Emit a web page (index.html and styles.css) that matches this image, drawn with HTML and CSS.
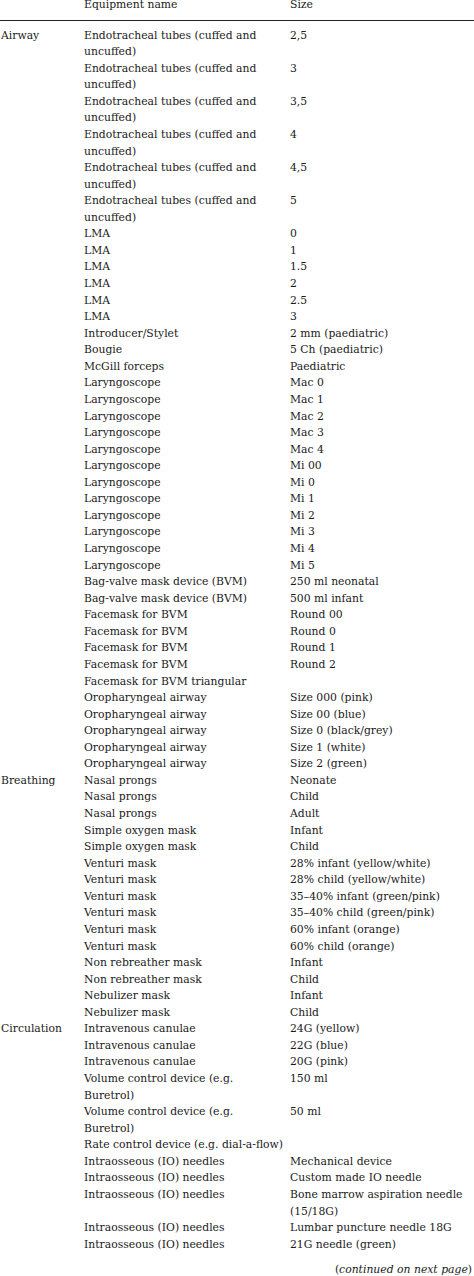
FILE: index.html
```html
<!DOCTYPE html>
<html>
<head>
<meta charset="utf-8">
<link rel="stylesheet" href="styles.css">
</head>
<body>
<div class="table">
  <div class="head">
    <div class="c1"></div>
    <div class="c2">Equipment name</div>
    <div class="c3">Size</div>
  </div>
  <div class="body">
    <div class="group">
      <div class="label">Airway</div>
      <div class="rows">
        <div class="row"><div>Endotracheal tubes (cuffed and<br>uncuffed)</div><div>2,5</div></div>
        <div class="row"><div>Endotracheal tubes (cuffed and<br>uncuffed)</div><div>3</div></div>
        <div class="row"><div>Endotracheal tubes (cuffed and<br>uncuffed)</div><div>3,5</div></div>
        <div class="row"><div>Endotracheal tubes (cuffed and<br>uncuffed)</div><div>4</div></div>
        <div class="row"><div>Endotracheal tubes (cuffed and<br>uncuffed)</div><div>4,5</div></div>
        <div class="row"><div>Endotracheal tubes (cuffed and<br>uncuffed)</div><div>5</div></div>
        <div class="row"><div>LMA</div><div>0</div></div>
        <div class="row"><div>LMA</div><div>1</div></div>
        <div class="row"><div>LMA</div><div>1.5</div></div>
        <div class="row"><div>LMA</div><div>2</div></div>
        <div class="row"><div>LMA</div><div>2.5</div></div>
        <div class="row"><div>LMA</div><div>3</div></div>
        <div class="row"><div>Introducer/Stylet</div><div>2 mm (paediatric)</div></div>
        <div class="row"><div>Bougie</div><div>5 Ch (paediatric)</div></div>
        <div class="row"><div>McGill forceps</div><div>Paediatric</div></div>
        <div class="row"><div>Laryngoscope</div><div>Mac 0</div></div>
        <div class="row"><div>Laryngoscope</div><div>Mac 1</div></div>
        <div class="row"><div>Laryngoscope</div><div>Mac 2</div></div>
        <div class="row"><div>Laryngoscope</div><div>Mac 3</div></div>
        <div class="row"><div>Laryngoscope</div><div>Mac 4</div></div>
        <div class="row"><div>Laryngoscope</div><div>Mi 00</div></div>
        <div class="row"><div>Laryngoscope</div><div>Mi 0</div></div>
        <div class="row"><div>Laryngoscope</div><div>Mi 1</div></div>
        <div class="row"><div>Laryngoscope</div><div>Mi 2</div></div>
        <div class="row"><div>Laryngoscope</div><div>Mi 3</div></div>
        <div class="row"><div>Laryngoscope</div><div>Mi 4</div></div>
        <div class="row"><div>Laryngoscope</div><div>Mi 5</div></div>
        <div class="row"><div>Bag-valve mask device (BVM)</div><div>250 ml neonatal</div></div>
        <div class="row"><div>Bag-valve mask device (BVM)</div><div>500 ml infant</div></div>
        <div class="row"><div>Facemask for BVM</div><div>Round 00</div></div>
        <div class="row"><div>Facemask for BVM</div><div>Round 0</div></div>
        <div class="row"><div>Facemask for BVM</div><div>Round 1</div></div>
        <div class="row"><div>Facemask for BVM</div><div>Round 2</div></div>
        <div class="row"><div class="span">Facemask for BVM triangular</div></div>
        <div class="row"><div>Oropharyngeal airway</div><div>Size 000 (pink)</div></div>
        <div class="row"><div>Oropharyngeal airway</div><div>Size 00 (blue)</div></div>
        <div class="row"><div>Oropharyngeal airway</div><div>Size 0 (black/grey)</div></div>
        <div class="row"><div>Oropharyngeal airway</div><div>Size 1 (white)</div></div>
        <div class="row"><div>Oropharyngeal airway</div><div>Size 2 (green)</div></div>
      </div>
    </div>
    <div class="group">
      <div class="label">Breathing</div>
      <div class="rows">
        <div class="row"><div>Nasal prongs</div><div>Neonate</div></div>
        <div class="row"><div>Nasal prongs</div><div>Child</div></div>
        <div class="row"><div>Nasal prongs</div><div>Adult</div></div>
        <div class="row"><div>Simple oxygen mask</div><div>Infant</div></div>
        <div class="row"><div>Simple oxygen mask</div><div>Child</div></div>
        <div class="row"><div>Venturi mask</div><div>28% infant (yellow/white)</div></div>
        <div class="row"><div>Venturi mask</div><div>28% child (yellow/white)</div></div>
        <div class="row"><div>Venturi mask</div><div>35–40% infant (green/pink)</div></div>
        <div class="row"><div>Venturi mask</div><div>35–40% child (green/pink)</div></div>
        <div class="row"><div>Venturi mask</div><div>60% infant (orange)</div></div>
        <div class="row"><div>Venturi mask</div><div>60% child (orange)</div></div>
        <div class="row"><div>Non rebreather mask</div><div>Infant</div></div>
        <div class="row"><div>Non rebreather mask</div><div>Child</div></div>
        <div class="row"><div>Nebulizer mask</div><div>Infant</div></div>
        <div class="row"><div>Nebulizer mask</div><div>Child</div></div>
      </div>
    </div>
    <div class="group">
      <div class="label">Circulation</div>
      <div class="rows">
        <div class="row"><div>Intravenous canulae</div><div>24G (yellow)</div></div>
        <div class="row"><div>Intravenous canulae</div><div>22G (blue)</div></div>
        <div class="row"><div>Intravenous canulae</div><div>20G (pink)</div></div>
        <div class="row"><div>Volume control device (e.g.<br>Buretrol)</div><div>150 ml</div></div>
        <div class="row"><div>Volume control device (e.g.<br>Buretrol)</div><div>50 ml</div></div>
        <div class="row"><div class="span">Rate control device (e.g. dial-a-flow)</div></div>
        <div class="row"><div>Intraosseous (IO) needles</div><div>Mechanical device</div></div>
        <div class="row"><div>Intraosseous (IO) needles</div><div>Custom made IO needle</div></div>
        <div class="row"><div>Intraosseous (IO) needles</div><div>Bone marrow aspiration needle<br>(15/18G)</div></div>
        <div class="row"><div>Intraosseous (IO) needles</div><div>Lumbar puncture needle 18G</div></div>
        <div class="row"><div>Intraosseous (IO) needles</div><div>21G needle (green)</div></div>
      </div>
    </div>
  </div>
  <div class="cont">(<em>continued on next page</em>)</div>
</div>
</body>
</html>
```
FILE: styles.css
```css
html, body {
  margin: 0;
  padding: 0;
  background: #ffffff;
}
body {
  font-family: "DejaVu Serif", "Liberation Serif", serif;
  font-size: 10.8px;
  line-height: 16.56px;
  color: #1a1a1a;
  overflow: hidden;
}
.table {
  width: 474px;
  margin-top: -3px;
}
.head {
  display: grid;
  grid-template-columns: 84px 206px 1fr;
  border-bottom: 1.6px solid #222;
  padding-bottom: 6px;
}
.body {
  padding-top: 7px;
}
.group {
  display: grid;
  grid-template-columns: 84px 1fr;
}
.label {
  padding-left: 1px;
}
.row {
  display: grid;
  grid-template-columns: 206px 1fr;
  white-space: nowrap;
}
.row .span {
  grid-column: 1 / 3;
}
.cont {
  text-align: right;
  padding-top: 9px;
  padding-right: 2px;
}
.cont em {
  font-style: italic;
}
```
